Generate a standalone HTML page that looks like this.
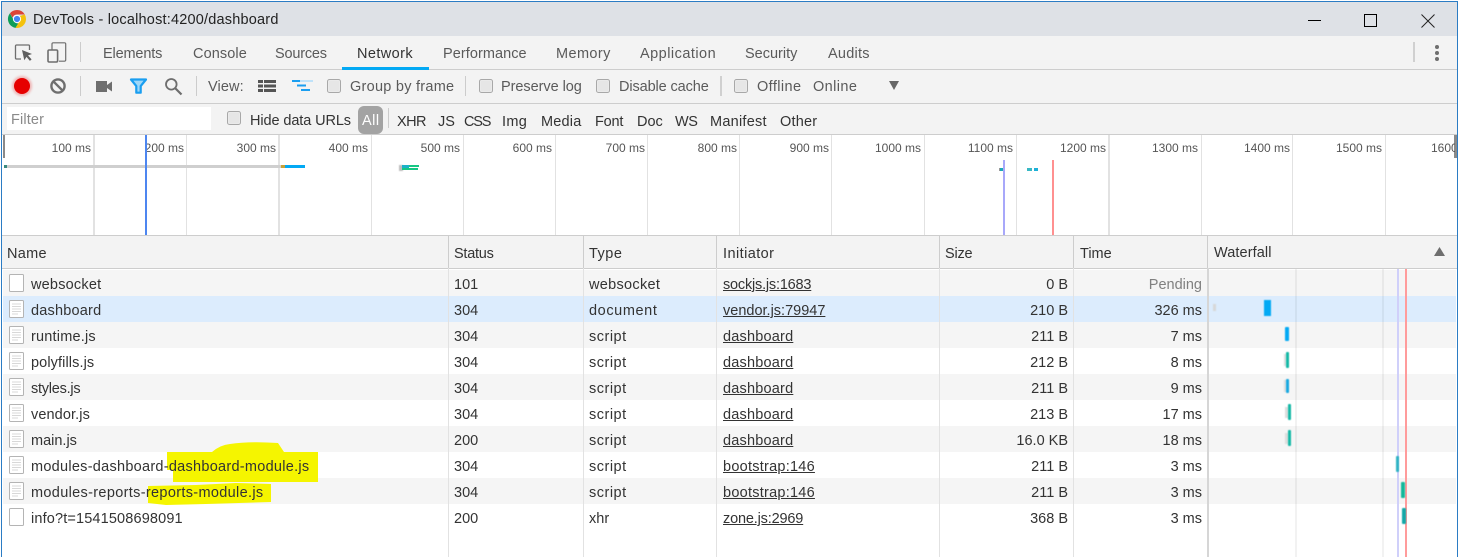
<!DOCTYPE html>
<html><head><meta charset="utf-8"><title>DevTools</title>
<style>
html,body{margin:0;padding:0;background:#fff}
#p{position:relative;width:1460px;height:557px;overflow:hidden;background:#fff;font-family:"Liberation Sans",sans-serif;font-size:14.5px;color:#333}
#p div,#p span,#p svg{position:absolute}
.t{white-space:nowrap;line-height:18px;height:18px}
.g{color:#5a5a5a}
.c{width:14px;height:14px;box-sizing:border-box;border:1px solid #a8a8a8;background:#e6e6e6;border-radius:2.5px;box-shadow:inset 0 0 1px #fff}
.r{left:3px;width:1453px;height:26px}
.v{top:268px;height:289px;width:1px;background:#e2e2e2}
.h{top:236px;height:33px;width:1px;background:#cdcdcd}
.gl{top:135px;height:100px;background:#e2e2e2}
.m{font-size:12px;color:#555;text-align:right;width:70px;top:141px;line-height:15px;height:15px;white-space:nowrap}
.u{text-decoration:underline}
.ra{text-align:right;width:100px}
.b{filter:blur(.4px)}
.dl{letter-spacing:.2px}
.sc{letter-spacing:.5px}
.bs{letter-spacing:.25px}
</style></head><body><div id="p">

<!-- backgrounds -->
<div style="left:2px;top:2px;width:1455px;height:34px;background:#dee1e6"></div>
<div style="left:2px;top:36px;width:1455px;height:33px;background:#f3f3f3"></div>
<div style="left:2px;top:69px;width:1455px;height:1px;background:#cdcdcd"></div>
<div style="left:2px;top:70px;width:1455px;height:33px;background:#f3f3f3"></div>
<div style="left:2px;top:103px;width:1455px;height:1px;background:#cdcdcd"></div>
<div style="left:2px;top:104px;width:1455px;height:30px;background:#f3f3f3"></div>
<div style="left:2px;top:134px;width:1455px;height:1px;background:#cdcdcd"></div>
<!-- window border -->
<div style="left:1px;top:1px;width:1457px;height:1px;background:#2b7cc4"></div>
<div style="left:1px;top:1px;width:1px;height:556px;background:#2b7cc4"></div>
<div style="left:1457px;top:1px;width:1px;height:556px;background:#2b7cc4"></div>

<!-- title bar -->
<svg style="left:7px;top:9px" width="20" height="20" viewBox="0 0 20 20">
<path d="M10 1a9 9 0 0 1 7.8 4.5H10a4.5 4.5 0 0 0-4.3 3.2L2.9 4.4A9 9 0 0 1 10 1z" fill="#db4437"/>
<path d="M2.9 4.4l3.9 6.8a4.5 4.5 0 0 0 4.6 3.2l-2.8 4.5A9 9 0 0 1 2.9 4.4z" fill="#0f9d58"/>
<path d="M17.8 5.5A9 9 0 0 1 8.6 18.9l3.9-6.8a4.5 4.5 0 0 0 .1-5.1z" fill="#f4c20d"/>
<circle cx="10" cy="10" r="3.6" fill="#4285f4" stroke="#fff" stroke-width="1"/>
</svg>
<span class="t" style="left:33px;top:11px;color:#222;letter-spacing:.2px">DevTools - localhost:4200/dashboard</span>
<div style="left:1308px;top:20px;width:13px;height:1px;background:#000"></div>
<div style="left:1364px;top:14px;width:13px;height:13px;box-sizing:border-box;border:1px solid #000"></div>
<svg style="left:1421px;top:14px" width="14" height="14" viewBox="0 0 14 14"><path d="M.5.5l13 13M13.5.5l-13 13" stroke="#222" stroke-width="1" fill="none"/></svg>

<!-- tab bar -->
<svg style="left:14px;top:43px" width="20" height="19" viewBox="0 0 20 19">
<path d="M7 16H2.500a1 1 0 0 1-1-1V3a1 1 0 0 1 1-1h12a1 1 0 0 1 1 1v4" stroke="#6e6e6e" stroke-width="1.3" fill="none"/>
<path d="M8 7l10 4-4 1.400 3.600 4-1.700 1.500-3.400-4-2.200 3.300z" fill="#5f5f5f"/>
</svg>
<svg style="left:46px;top:41px" width="22" height="22" viewBox="0 0 22 22">
<path d="M6 9V3a1.200 1.200 0 0 1 1.200-1.200H18.500A1.200 1.200 0 0 1 19.700 3v16a1.200 1.200 0 0 1-1.200 1.200H13" stroke="#6e6e6e" stroke-width="1.200" fill="none"/>
<rect x="2" y="9" width="9.600" height="12" rx="1.200" stroke="#6e6e6e" stroke-width="1.600" fill="none"/>
</svg>
<div style="left:80px;top:42px;width:1px;height:20px;background:#ccc"></div>
<span class="t g" style="left:103px;top:45px;letter-spacing:-.15px">Elements</span>
<span class="t g" style="left:193px;top:45px;letter-spacing:.1px">Console</span>
<span class="t g" style="left:275px;top:45px;letter-spacing:-.2px">Sources</span>
<span class="t" style="left:357px;top:45px;letter-spacing:.4px">Network</span>
<div style="left:342px;top:67px;width:87px;height:3px;background:#03a9f4"></div>
<span class="t g" style="left:443px;top:45px;letter-spacing:.06px">Performance</span>
<span class="t g" style="left:556px;top:45px;letter-spacing:.4px">Memory</span>
<span class="t g" style="left:640px;top:45px;letter-spacing:.47px">Application</span>
<span class="t g" style="left:745px;top:45px">Security</span>
<span class="t g" style="left:828px;top:45px;letter-spacing:.25px">Audits</span>
<div style="left:1413px;top:42px;width:2px;height:20px;background:#d0d0d0"></div>
<div style="left:1435px;top:45px;width:4px;height:4px;border-radius:50%;background:#6e6e6e"></div>
<div style="left:1435px;top:51px;width:4px;height:4px;border-radius:50%;background:#6e6e6e"></div>
<div style="left:1435px;top:57px;width:4px;height:4px;border-radius:50%;background:#6e6e6e"></div>

<!-- toolbar -->
<div style="left:14px;top:78px;width:16px;height:16px;border-radius:50%;background:#e60000;box-shadow:0 0 2px 2px rgba(230,60,60,.32)"></div>
<svg style="left:49px;top:77px" width="18" height="18" viewBox="0 0 18 18"><circle cx="9" cy="9" r="6.600" stroke="#6e6e6e" stroke-width="2.400" fill="none"/><path d="M4.300 4.300l9.400 9.400" stroke="#6e6e6e" stroke-width="2.400"/></svg>
<div style="left:80px;top:76px;width:1px;height:20px;background:#ccc"></div>
<svg style="left:95px;top:80px" width="18" height="13" viewBox="0 0 18 13"><rect x="1" y="1" width="11" height="11" fill="#6e6e6e"/><path d="M12 5l5-3.500v10L12 8z" fill="#6e6e6e"/></svg>
<svg style="left:129px;top:78px" width="19" height="17" viewBox="0 0 19 17"><path d="M2 1.500h15l-5.300 6.600v6.600h-4.400V8.100z" fill="#9fd7f8" stroke="#1a9ef0" stroke-width="2.200" stroke-linejoin="round"/></svg>
<svg style="left:164px;top:77px" width="19" height="19" viewBox="0 0 19 19"><circle cx="7.300" cy="7.300" r="5.300" stroke="#6e6e6e" stroke-width="1.800" fill="none"/><path d="M11 11l6.500 6.500" stroke="#6e6e6e" stroke-width="2.200"/></svg>
<div style="left:196px;top:76px;width:1px;height:20px;background:#ccc"></div>
<span class="t g" style="left:208px;top:78px;letter-spacing:.1px">View:</span>
<svg style="left:258px;top:80px" width="18" height="12" viewBox="0 0 18 12"><path d="M0 0h5v3H0zM6 0h12v3H6zM0 4.500h5v3H0zM6 4.500h12v3H6zM0 9h5v3H0zM6 9h12v3H6z" fill="#555"/></svg>
<svg style="left:292px;top:80px" width="22" height="14" viewBox="0 0 22 14"><path d="M0 0h8v2H0z" fill="#1a9ef0"/><path d="M8 0h13v2H8z" fill="#bfe2f9"/><path d="M5 4.500h9v2H5z" fill="#1a9ef0"/><path d="M9 9h9v2H9z" fill="#1a9ef0"/></svg>
<div class="c" style="left:327px;top:79px"></div>
<span class="t g" style="left:350px;top:78px;letter-spacing:.26px">Group by frame</span>
<div style="left:465px;top:76px;width:1px;height:20px;background:#ccc"></div>
<div class="c" style="left:479px;top:79px"></div>
<span class="t g" style="left:501px;top:78px;letter-spacing:-.05px">Preserve log</span>
<div class="c" style="left:596px;top:79px"></div>
<span class="t g" style="left:619px;top:78px;letter-spacing:-.11px">Disable cache</span>
<div style="left:720px;top:76px;width:2px;height:20px;background:#d0d0d0"></div>
<div class="c" style="left:734px;top:79px"></div>
<span class="t g" style="left:757px;top:78px;letter-spacing:.4px">Offline</span>
<span class="t g" style="left:813px;top:78px;letter-spacing:.4px">Online</span>
<svg style="left:889px;top:81px" width="10" height="9" viewBox="0 0 10 9"><path d="M0 0h10L5 9z" fill="#666"/></svg>

<!-- filter bar -->
<div style="left:7px;top:107px;width:204px;height:23px;background:#fff"></div>
<span class="t" style="left:11px;top:111px;color:#8a8a8a;letter-spacing:.15px">Filter</span>
<div class="c" style="left:227px;top:111px"></div>
<span class="t" style="left:250px;top:112px;letter-spacing:-.1px">Hide data URLs</span>
<div style="left:358px;top:106px;width:25px;height:28px;border-radius:6px;background:#a3a3a3"></div>
<span class="t" style="left:362px;top:112px;color:#fff;letter-spacing:.5px">All</span>
<div style="left:388px;top:108px;width:1px;height:20px;background:#ccc"></div>
<span class="t" style="left:397px;top:113px;letter-spacing:-.55px">XHR</span>
<span class="t" style="left:438px;top:113px">JS</span>
<span class="t" style="left:464px;top:113px;letter-spacing:-1.2px">CSS</span>
<span class="t" style="left:502px;top:113px;letter-spacing:.3px">Img</span>
<span class="t" style="left:541px;top:113px;letter-spacing:.2px">Media</span>
<span class="t" style="left:595px;top:113px;letter-spacing:-.2px">Font</span>
<span class="t" style="left:637px;top:113px">Doc</span>
<span class="t" style="left:675px;top:113px;letter-spacing:-.4px">WS</span>
<span class="t" style="left:710px;top:113px;letter-spacing:.25px">Manifest</span>
<span class="t" style="left:780px;top:113px;letter-spacing:.2px">Other</span>

<!-- overview -->
<div class="gl" style="left:93px;width:2px"></div>
<div class="gl" style="left:186px;width:1px"></div>
<div class="gl" style="left:278px;width:2px"></div>
<div class="gl" style="left:371px;width:1px"></div>
<div class="gl" style="left:463px;width:1px"></div>
<div class="gl" style="left:555px;width:1px"></div>
<div class="gl" style="left:647px;width:1px"></div>
<div class="gl" style="left:739px;width:1px"></div>
<div class="gl" style="left:831px;width:1px"></div>
<div class="gl" style="left:924px;width:1px"></div>
<div class="gl" style="left:1016px;width:1px"></div>
<div class="gl" style="left:1108px;width:2px"></div>
<div class="gl" style="left:1201px;width:1px"></div>
<div class="gl" style="left:1292px;width:1px"></div>
<div class="gl" style="left:1385px;width:1px"></div>
<div style="left:3px;top:135px;width:2px;height:23px;background:#8a8a8a"></div>
<div style="left:1454px;top:135px;width:3px;height:23px;background:#8a8a8a"></div>
<div class="m" style="left:21px">100 ms</div>
<div class="m" style="left:114px">200 ms</div>
<div class="m" style="left:206px">300 ms</div>
<div class="m" style="left:298px">400 ms</div>
<div class="m" style="left:390px">500 ms</div>
<div class="m" style="left:482px">600 ms</div>
<div class="m" style="left:575px">700 ms</div>
<div class="m" style="left:667px">800 ms</div>
<div class="m" style="left:759px">900 ms</div>
<div class="m" style="left:851px">1000 ms</div>
<div class="m" style="left:943px">1100 ms</div>
<div class="m" style="left:1036px">1200 ms</div>
<div class="m" style="left:1128px">1300 ms</div>
<div class="m" style="left:1220px">1400 ms</div>
<div class="m" style="left:1312px">1500 ms</div>
<div class="m" style="left:1384px;width:71px;overflow:hidden;text-align:left;padding-left:47px;box-sizing:border-box">1600 ms</div>
<div style="left:4px;top:165px;width:277px;height:3px;background:#cfcfcf"></div>
<div style="left:4px;top:165px;width:3px;height:3px;background:#3a8a80"></div>
<div style="left:281px;top:165px;width:4px;height:3px;background:#c7a23a"></div>
<div style="left:285px;top:165px;width:20px;height:3px;background:#03a9f4"></div>
<div class="b" style="left:399px;top:165px;width:4px;height:6px;background:#bdbdbd"></div>
<div style="left:402px;top:165px;width:17px;height:2px;background:#16c784"></div>
<div style="left:402px;top:168px;width:16px;height:2px;background:#16c784"></div>
<div style="left:402px;top:165px;width:7px;height:3px;background:#1bb0c8"></div>
<div style="left:145px;top:135px;width:2px;height:100px;background:#4d86f0"></div>
<div style="left:999px;top:168px;width:3px;height:3px;background:#999"></div>
<div style="left:1000px;top:168px;width:3px;height:3px;background:#1ca8b8"></div>
<div style="left:1027px;top:168px;width:5px;height:3px;background:#38b8c4"></div>
<div style="left:1034px;top:168px;width:4px;height:3px;background:#1cb0d8"></div>
<div style="left:1003px;top:160px;width:2px;height:75px;background:#a8a8fa"></div>
<div style="left:1052px;top:160px;width:2px;height:75px;background:#ff9090"></div>

<!-- header -->
<div style="left:2px;top:235px;width:1455px;height:1px;background:#cdcdcd"></div>
<div style="left:2px;top:236px;width:1455px;height:32px;background:#f3f3f3"></div>
<div style="left:2px;top:268px;width:1455px;height:1px;background:#cdcdcd"></div>
<div class="h" style="left:448px"></div><div class="h" style="left:583px"></div><div class="h" style="left:716px"></div><div class="h" style="left:939px"></div><div class="h" style="left:1073px"></div><div class="h" style="left:1207px"></div>
<span class="t" style="left:7px;top:245px;letter-spacing:.3px">Name</span>
<span class="t" style="left:454px;top:245px;letter-spacing:-.25px">Status</span>
<span class="t" style="left:589px;top:245px;letter-spacing:.5px">Type</span>
<span class="t" style="left:723px;top:245px;letter-spacing:.43px">Initiator</span>
<span class="t" style="left:945px;top:245px;letter-spacing:-.2px">Size</span>
<span class="t" style="left:1080px;top:245px">Time</span>
<span class="t" style="left:1214px;top:244px;letter-spacing:.1px">Waterfall</span>
<svg style="left:1434px;top:247px" width="11" height="9" viewBox="0 0 11 9"><path d="M0 9L5.500 0 11 9z" fill="#6e6e6e"/></svg>

<!-- rows -->
<div class="r" style="top:270px;background:#f5f5f5"></div>
<div class="r" style="top:296px;background:#dcecfd"></div>
<div class="r" style="top:322px;background:#f5f5f5"></div>
<div class="r" style="top:374px;background:#f5f5f5"></div>
<div class="r" style="top:426px;background:#f5f5f5"></div>
<div class="r" style="top:478px;background:#f5f5f5"></div>
<div class="v" style="left:448px"></div><div class="v" style="left:583px"></div><div class="v" style="left:716px"></div><div class="v" style="left:939px"></div><div class="v" style="left:1073px"></div>
<div style="left:1207px;top:268px;width:2px;height:289px;background:#d6d6d6"></div>

<!-- highlights -->
<svg style="left:160px;top:438px" width="170" height="50" viewBox="0 0 170 50">
<path d="M7 14H52Q60 7 70 6 90 3 118 5L124 14H158V44H13V32H7z" fill="#f5f500"/>
</svg>
<svg style="left:146px;top:482px" width="130" height="26" viewBox="0 0 130 26"><path d="M2 4L50 3 90 1 125 2V20L60 22 20 23 2 21z" fill="#f5f500"/></svg>

<!-- file icons -->
<svg style="left:9px;top:274px" width="16" height="18"><rect x=".5" y=".5" width="14" height="17" rx="1" fill="#fff" stroke="#b4b4b4"/></svg>
<svg style="left:9px;top:300px" width="16" height="18"><rect x=".5" y=".5" width="14" height="17" rx="1" fill="#fff" stroke="#b4b4b4"/><path d="M3 4h9M3 6.500h9M3 9h9M3 11.500h9M3 14h6" stroke="#d8d8d8"/></svg>
<svg style="left:9px;top:326px" width="16" height="18"><rect x=".5" y=".5" width="14" height="17" rx="1" fill="#fff" stroke="#b4b4b4"/><path d="M3 4h9M3 6.500h9M3 9h9M3 11.500h9M3 14h6" stroke="#d8d8d8"/></svg>
<svg style="left:9px;top:352px" width="16" height="18"><rect x=".5" y=".5" width="14" height="17" rx="1" fill="#fff" stroke="#b4b4b4"/><path d="M3 4h9M3 6.500h9M3 9h9M3 11.500h9M3 14h6" stroke="#d8d8d8"/></svg>
<svg style="left:9px;top:378px" width="16" height="18"><rect x=".5" y=".5" width="14" height="17" rx="1" fill="#fff" stroke="#b4b4b4"/><path d="M3 4h9M3 6.500h9M3 9h9M3 11.500h9M3 14h6" stroke="#d8d8d8"/></svg>
<svg style="left:9px;top:404px" width="16" height="18"><rect x=".5" y=".5" width="14" height="17" rx="1" fill="#fff" stroke="#b4b4b4"/><path d="M3 4h9M3 6.500h9M3 9h9M3 11.500h9M3 14h6" stroke="#d8d8d8"/></svg>
<svg style="left:9px;top:430px" width="16" height="18"><rect x=".5" y=".5" width="14" height="17" rx="1" fill="#fff" stroke="#b4b4b4"/><path d="M3 4h9M3 6.500h9M3 9h9M3 11.500h9M3 14h6" stroke="#d8d8d8"/></svg>
<svg style="left:9px;top:456px" width="16" height="18"><rect x=".5" y=".5" width="14" height="17" rx="1" fill="#fff" stroke="#b4b4b4"/><path d="M3 4h9M3 6.500h9M3 9h9M3 11.500h9M3 14h6" stroke="#d8d8d8"/></svg>
<svg style="left:9px;top:482px" width="16" height="18"><rect x=".5" y=".5" width="14" height="17" rx="1" fill="#fff" stroke="#b4b4b4"/><path d="M3 4h9M3 6.500h9M3 9h9M3 11.500h9M3 14h6" stroke="#d8d8d8"/></svg>
<svg style="left:9px;top:508px" width="16" height="18"><rect x=".5" y=".5" width="14" height="17" rx="1" fill="#fff" stroke="#b4b4b4"/></svg>

<!-- names -->
<span class="t dl" style="left:31px;top:276px">websocket</span>
<span class="t dl" style="left:31px;top:302px">dashboard</span>
<span class="t dl" style="left:31px;top:328px">runtime.js</span>
<span class="t" style="left:31px;top:354px;letter-spacing:.1px">polyfills.js</span>
<span class="t" style="left:31px;top:380px;letter-spacing:-.25px">styles.js</span>
<span class="t" style="left:31px;top:406px;letter-spacing:.1px">vendor.js</span>
<span class="t" style="left:31px;top:432px">main.js</span>
<span class="t" style="left:31px;top:458px;letter-spacing:.27px">modules-dashboard-dashboard-module.js</span>
<span class="t" style="left:31px;top:484px;letter-spacing:.33px">modules-reports-reports-module.js</span>
<span class="t" style="left:31px;top:510px;letter-spacing:.15px">info?t=1541508698091</span>

<!-- status -->
<span class="t" style="left:454px;top:276px">101</span>
<span class="t" style="left:454px;top:302px">304</span>
<span class="t" style="left:454px;top:328px">304</span>
<span class="t" style="left:454px;top:354px">304</span>
<span class="t" style="left:454px;top:380px">304</span>
<span class="t" style="left:454px;top:406px">304</span>
<span class="t" style="left:454px;top:432px">200</span>
<span class="t" style="left:454px;top:458px">304</span>
<span class="t" style="left:454px;top:484px">304</span>
<span class="t" style="left:454px;top:510px">200</span>

<!-- type -->
<span class="t" style="left:589px;top:276px;letter-spacing:.3px">websocket</span>
<span class="t" style="left:589px;top:302px;letter-spacing:.6px">document</span>
<span class="t sc" style="left:589px;top:328px">script</span>
<span class="t sc" style="left:589px;top:354px">script</span>
<span class="t sc" style="left:589px;top:380px">script</span>
<span class="t sc" style="left:589px;top:406px">script</span>
<span class="t sc" style="left:589px;top:432px">script</span>
<span class="t sc" style="left:589px;top:458px">script</span>
<span class="t sc" style="left:589px;top:484px">script</span>
<span class="t" style="left:589px;top:510px">xhr</span>

<!-- initiator -->
<span class="t u" style="left:723px;top:276px;letter-spacing:-.2px">sockjs.js:1683</span>
<span class="t u" style="left:723px;top:302px">vendor.js:79947</span>
<span class="t u dl" style="left:723px;top:328px">dashboard</span>
<span class="t u dl" style="left:723px;top:354px">dashboard</span>
<span class="t u dl" style="left:723px;top:380px">dashboard</span>
<span class="t u dl" style="left:723px;top:406px">dashboard</span>
<span class="t u dl" style="left:723px;top:432px">dashboard</span>
<span class="t u bs" style="left:723px;top:458px">bootstrap:146</span>
<span class="t u bs" style="left:723px;top:484px">bootstrap:146</span>
<span class="t u" style="left:723px;top:510px;letter-spacing:-.17px">zone.js:2969</span>

<!-- size -->
<span class="t ra" style="left:968px;top:276px">0 B</span>
<span class="t ra" style="left:968px;top:302px">210 B</span>
<span class="t ra" style="left:968px;top:328px">211 B</span>
<span class="t ra" style="left:968px;top:354px">212 B</span>
<span class="t ra" style="left:968px;top:380px">211 B</span>
<span class="t ra" style="left:968px;top:406px">213 B</span>
<span class="t ra" style="left:968px;top:432px">16.0 KB</span>
<span class="t ra" style="left:968px;top:458px">211 B</span>
<span class="t ra" style="left:968px;top:484px">211 B</span>
<span class="t ra" style="left:968px;top:510px">368 B</span>

<!-- time -->
<span class="t ra" style="left:1102px;top:276px;color:#808080">Pending</span>
<span class="t ra" style="left:1102px;top:302px">326 ms</span>
<span class="t ra" style="left:1102px;top:328px">7 ms</span>
<span class="t ra" style="left:1102px;top:354px">8 ms</span>
<span class="t ra" style="left:1102px;top:380px">9 ms</span>
<span class="t ra" style="left:1102px;top:406px">17 ms</span>
<span class="t ra" style="left:1102px;top:432px">18 ms</span>
<span class="t ra" style="left:1102px;top:458px">3 ms</span>
<span class="t ra" style="left:1102px;top:484px">3 ms</span>
<span class="t ra" style="left:1102px;top:510px">3 ms</span>

<!-- waterfall -->
<div style="left:1295px;top:269px;width:2px;height:288px;background:rgba(0,0,0,.05)"></div>
<div style="left:1382px;top:269px;width:2px;height:288px;background:rgba(0,0,0,.05)"></div>
<div style="left:1397px;top:269px;width:2px;height:288px;background:#d0d0fa"></div>
<div style="left:1405px;top:269px;width:2px;height:288px;background:#ff9c9c"></div>
<div class="b" style="left:1213px;top:304px;width:3px;height:7px;background:#d8d8d8"></div>
<div class="b" style="left:1264px;top:300px;width:7px;height:16px;background:#03a9f4"></div>
<div class="b" style="left:1285px;top:327px;width:4px;height:14px;background:#03a9f4;border-radius:1px"></div>
<div class="b" style="left:1284px;top:354px;width:2px;height:12px;background:#dcdcdc"></div>
<div class="b" style="left:1286px;top:352px;width:3px;height:16px;background:#14b8a6;border-radius:1px"></div>
<div class="b" style="left:1284px;top:380px;width:2px;height:12px;background:#dcdcdc"></div>
<div class="b" style="left:1286px;top:379px;width:3px;height:14px;background:#18a8e0;border-radius:1px"></div>
<div class="b" style="left:1285px;top:407px;width:3px;height:11px;background:#dcdcdc"></div>
<div class="b" style="left:1288px;top:404px;width:3px;height:16px;background:#14b8a6;border-radius:1px"></div>
<div class="b" style="left:1285px;top:433px;width:3px;height:11px;background:#dcdcdc"></div>
<div class="b" style="left:1288px;top:430px;width:3px;height:16px;background:#14b8a6;border-radius:1px"></div>
<div class="b" style="left:1396px;top:456px;width:3px;height:16px;background:#30b4c4;border-radius:1px"></div>
<div class="b" style="left:1401px;top:482px;width:4px;height:16px;background:#14b89a;border-radius:1px"></div>
<div class="b" style="left:1402px;top:508px;width:4px;height:16px;background:#14a8a8;border-radius:1px"></div>
</div></body></html>
